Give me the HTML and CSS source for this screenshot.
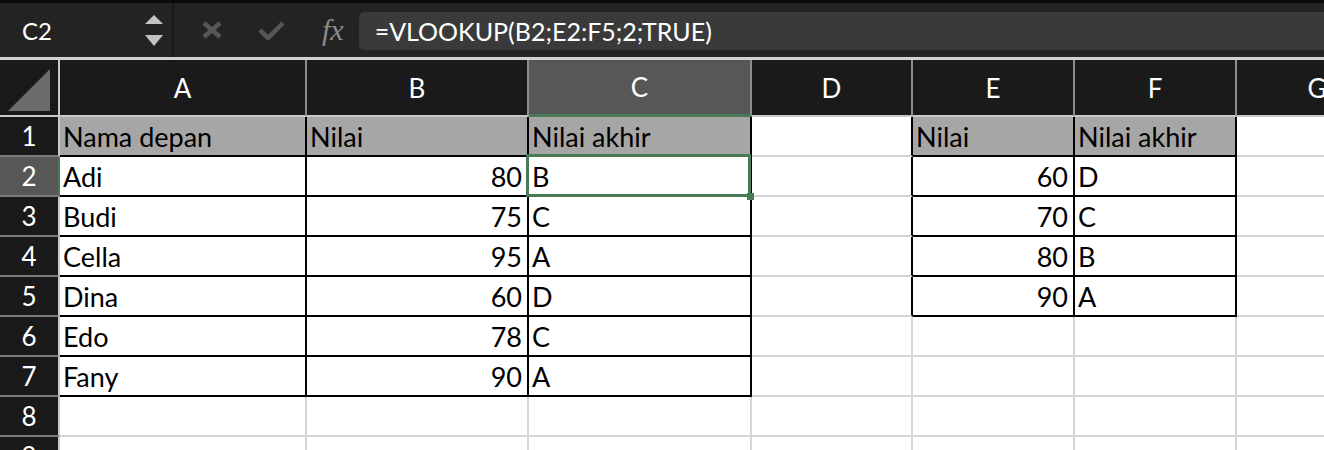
FILE: index.html
```html
<!DOCTYPE html>
<html lang="id">
<head>
	<meta charset="UTF-8">
	<title>Nilai akhir</title>
	<link rel="stylesheet" href="styles.css">
</head>
<body>
	<div class="toolbar">
		<div class="namebox">
			<span class="ref">C2</span>
			<svg class="spin" width="18" height="31" viewBox="0 0 18 31">
				<polygon points="0,9 9,0 18,9" />
				<polygon points="0,20 18,20 9,31" />
			</svg>
		</div>
		<svg class="icon cancel" width="20" height="18" viewBox="0 0 20 18">
			<line x1="2" y1="2" x2="18" y2="16" />
			<line x1="18" y1="2" x2="2" y2="16" />
		</svg>
		<svg class="icon enter" width="27" height="19" viewBox="0 0 27 19">
			<polyline points="2,9 10,17 25,2" />
		</svg>
		<span class="fx">fx</span>
		<div class="formula">=VLOOKUP(B2;E2:F5;2;TRUE)</div>
	</div>

	<div class="sheet">
		<!-- column headers -->
		<div class="corner">
			<svg width="44" height="42" viewBox="0 0 44 42"><polygon points="0,42 42,0 42,42" /></svg>
		</div>
		<div class="colhead">A</div>
		<div class="colhead">B</div>
		<div class="colhead sel">C</div>
		<div class="colhead">D</div>
		<div class="colhead">E</div>
		<div class="colhead">F</div>
		<div class="colhead">G</div>

		<!-- row 1 -->
		<div class="rowhead">1</div>
		<div class="cell b head">Nama depan</div>
		<div class="cell b head">Nilai</div>
		<div class="cell b head">Nilai akhir</div>
		<div class="cell b-right"></div>
		<div class="cell b head">Nilai</div>
		<div class="cell b head">Nilai akhir</div>
		<div class="cell"></div>

		<!-- row 2 -->
		<div class="rowhead sel">2</div>
		<div class="cell b">Adi</div>
		<div class="cell b num">80</div>
		<div class="cell b active">B</div>
		<div class="cell b-right"></div>
		<div class="cell b num">60</div>
		<div class="cell b">D</div>
		<div class="cell"></div>

		<!-- row 3 -->
		<div class="rowhead">3</div>
		<div class="cell b">Budi</div>
		<div class="cell b num">75</div>
		<div class="cell b">C</div>
		<div class="cell b-right"></div>
		<div class="cell b num">70</div>
		<div class="cell b">C</div>
		<div class="cell"></div>

		<!-- row 4 -->
		<div class="rowhead">4</div>
		<div class="cell b">Cella</div>
		<div class="cell b num">95</div>
		<div class="cell b">A</div>
		<div class="cell b-right"></div>
		<div class="cell b num">80</div>
		<div class="cell b">B</div>
		<div class="cell"></div>

		<!-- row 5 -->
		<div class="rowhead">5</div>
		<div class="cell b">Dina</div>
		<div class="cell b num">60</div>
		<div class="cell b">D</div>
		<div class="cell b-right"></div>
		<div class="cell b num">90</div>
		<div class="cell b">A</div>
		<div class="cell"></div>

		<!-- row 6 -->
		<div class="rowhead">6</div>
		<div class="cell b">Edo</div>
		<div class="cell b num">78</div>
		<div class="cell b">C</div>
		<div class="cell"></div>
		<div class="cell"></div>
		<div class="cell"></div>
		<div class="cell"></div>

		<!-- row 7 -->
		<div class="rowhead">7</div>
		<div class="cell b">Fany</div>
		<div class="cell b num">90</div>
		<div class="cell b">A</div>
		<div class="cell"></div>
		<div class="cell"></div>
		<div class="cell"></div>
		<div class="cell"></div>

		<!-- row 8 -->
		<div class="rowhead">8</div>
		<div class="cell"></div>
		<div class="cell"></div>
		<div class="cell"></div>
		<div class="cell"></div>
		<div class="cell"></div>
		<div class="cell"></div>
		<div class="cell"></div>

		<!-- row 9 -->
		<div class="rowhead">9</div>
		<div class="cell"></div>
		<div class="cell"></div>
		<div class="cell"></div>
		<div class="cell"></div>
		<div class="cell"></div>
		<div class="cell"></div>
		<div class="cell"></div>
	</div>
</body>
</html>
```

FILE: styles.css
```css
body {
	margin: 0;
	background: #fff;
	font-family: Lato, "Liberation Sans", sans-serif;
	overflow: hidden;
}

/* formula bar */
.toolbar {
	display: flex;
	align-items: center;
	height: 54px;
	background: #232323;
	border-top: 3px solid #0c0c0c;
	border-bottom: 3px solid #d2d2d2;
	color: #fff;
}
.namebox {
	display: flex;
	align-items: center;
	justify-content: space-between;
	width: 141px;
	height: 100%;
	padding: 0 9px 0 22px;
	border-right: 2px solid #191919;
}
.ref {
	font-size: 24px;
}
.spin polygon {
	fill: #c4c4c4;
}
.icon {
	fill: none;
	stroke: #575757;
	stroke-width: 4.5;
}
.cancel {
	margin-left: 28px;
}
.enter {
	margin-left: 36px;
}
.fx {
	margin-left: 37px;
	font-family: "Liberation Serif", serif;
	font-style: italic;
	font-size: 30px;
	color: #8c8c8c;
}
.formula {
	flex: 1;
	align-self: stretch;
	display: flex;
	align-items: center;
	margin: 9px 0 7px 15px;
	padding-left: 16px;
	background: #3a3a3a;
	border-radius: 5px 0 0 5px;
	font-size: 25px;
	color: #fff;
}

/* grid */
.sheet {
	display: grid;
	grid-template-columns: 60px 247px 222px 223px 161px 162px 162px 162px;
	grid-template-rows: 57px repeat(9, 40px);
	width: 1324px;
	overflow: hidden;
}
.corner,
.colhead,
.rowhead {
	box-sizing: border-box;
	background: #1a1a1a;
	color: #fff;
	font-size: 26px;
	display: flex;
	align-items: center;
	justify-content: center;
}
.corner {
	align-items: flex-end;
	justify-content: flex-end;
	padding: 0 6px 4px 0;
	border-right: 2px solid #c9c9c9;
	border-bottom: 2px solid #c9c9c9;
}
.corner polygon {
	fill: #6b6b6b;
}
.colhead {
	border-right: 2px solid #8d8d8d;
	border-bottom: 2px solid #c9c9c9;
}
.colhead.sel {
	background: #575757;
	border-bottom: 3px solid #487a55;
}
.rowhead {
	border-right: 2px solid #c9c9c9;
	border-bottom: 2px solid #7c7c7c;
}
.rowhead.sel {
	background: #575757;
	border-right-color: #487a55;
}

.cell {
	box-sizing: border-box;
	position: relative;
	padding: 0 5px 0 3px;
	border-right: 2px solid #d6d6d6;
	border-bottom: 2px solid #d6d6d6;
	font-size: 27px;
	line-height: 40px;
	color: #000;
	white-space: nowrap;
}
.cell.b {
	border-color: #000;
}
.cell.b-right {
	border-right-color: #000;
}
.cell.head {
	background: #a6a6a6;
}
.cell.num {
	text-align: right;
}

/* selected cell C2 */
.cell.active::after {
	content: "";
	position: absolute;
	top: -3px;
	left: -3px;
	right: -1px;
	bottom: -2px;
	border: 3px solid #487a55;
}
.cell.active::before {
	content: "";
	position: absolute;
	right: -4px;
	bottom: -5px;
	width: 7px;
	height: 7px;
	background: #487a55;
	z-index: 1;
}
```
